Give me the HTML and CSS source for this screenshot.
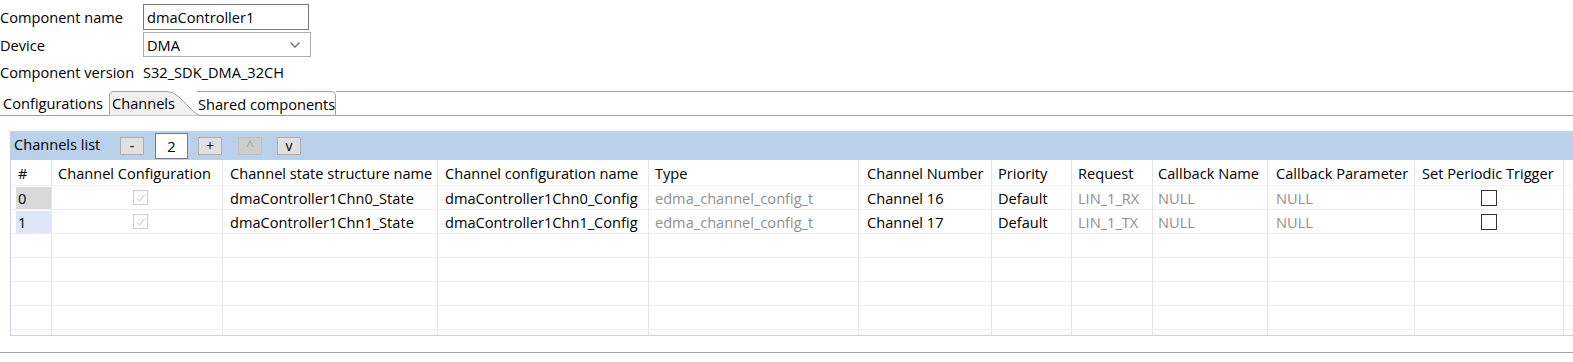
FILE: index.html
```html
<!DOCTYPE html>
<html>
<head>
<meta charset="utf-8">
<link rel="stylesheet" href="styles.css">
</head>
<body>
<div class="form">
  <div class="frow r1"><span class="lbl">Component name</span><div class="input name">dmaController1</div></div>
  <div class="frow r2"><span class="lbl">Device</span><div class="select"><span>DMA</span><svg class="chev" width="12" height="8" viewBox="0 0 12 8"><path d="M1.5 1.5 L6 6 L10.5 1.5" fill="none" stroke="#6d6d6d" stroke-width="1.3"/></svg></div></div>
  <div class="frow r3"><span class="lbl">Component version</span><span class="val">S32_SDK_DMA_32CH</span></div>
</div>

<div class="tabs">
  <div class="tab first">Configurations</div>
  <div class="tab sel">
    <svg class="selbg" width="92" height="25" viewBox="0 0 92 25" preserveAspectRatio="none"><path d="M0.5 25 L0.5 5 Q0.5 0.5 5 0.5 L58 0.5 Q64 0.5 70 6 L82 18 Q88 24.5 92 24.5 L92 25 Z" fill="#f0f0f0" stroke="#a0a0a0" stroke-width="1"/></svg>
    <span>Channels</span>
  </div>
  <div class="tab shared">Shared components</div>
  <div class="tabfill"></div>
</div>

<div class="panel">
  <div class="listbar">
    <span class="ltitle">Channels list</span>
    <span class="btn minus">-</span>
    <span class="count">2</span>
    <span class="btn plus">+</span>
    <span class="btn up dis">^</span>
    <span class="btn down">v</span>
  </div>
  <div class="grid">
    <div class="row head">
      <div class="c c0">#</div>
      <div class="c c1">Channel Configuration</div>
      <div class="c c2">Channel state structure name</div>
      <div class="c c3">Channel configuration name</div>
      <div class="c c4">Type</div>
      <div class="c c5">Channel Number</div>
      <div class="c c6">Priority</div>
      <div class="c c7">Request</div>
      <div class="c c8">Callback Name</div>
      <div class="c c9">Callback Parameter</div>
      <div class="c c10">Set Periodic Trigger</div>
      <div class="c cf"></div>
    </div>
    <div class="row">
      <div class="c c0"><span class="idx idx-sel">0</span></div>
      <div class="c c1"><span class="cb cb-dis"><svg width="13" height="12" viewBox="0 0 13 12"><path d="M3 6.5 L5.5 9 L10.5 3" fill="none" stroke="#c4c4c4" stroke-width="1"/></svg></span></div>
      <div class="c c2">dmaController1Chn0_State</div>
      <div class="c c3">dmaController1Chn0_Config</div>
      <div class="c c4 g">edma_channel_config_t</div>
      <div class="c c5">Channel 16</div>
      <div class="c c6">Default</div>
      <div class="c c7 g">LIN_1_RX</div>
      <div class="c c8 g">NULL</div>
      <div class="c c9 g">NULL</div>
      <div class="c c10"><span class="cb cb-on"></span></div>
      <div class="c cf"></div>
    </div>
    <div class="row">
      <div class="c c0"><span class="idx idx-alt">1</span></div>
      <div class="c c1"><span class="cb cb-dis"><svg width="13" height="12" viewBox="0 0 13 12"><path d="M3 6.5 L5.5 9 L10.5 3" fill="none" stroke="#c4c4c4" stroke-width="1"/></svg></span></div>
      <div class="c c2">dmaController1Chn1_State</div>
      <div class="c c3">dmaController1Chn1_Config</div>
      <div class="c c4 g">edma_channel_config_t</div>
      <div class="c c5">Channel 17</div>
      <div class="c c6">Default</div>
      <div class="c c7 g">LIN_1_TX</div>
      <div class="c c8 g">NULL</div>
      <div class="c c9 g">NULL</div>
      <div class="c c10"><span class="cb cb-on"></span></div>
      <div class="c cf"></div>
    </div>
    <div class="row empty"><div class="c c0"></div><div class="c c1"></div><div class="c c2"></div><div class="c c3"></div><div class="c c4"></div><div class="c c5"></div><div class="c c6"></div><div class="c c7"></div><div class="c c8"></div><div class="c c9"></div><div class="c c10"></div><div class="c cf"></div></div>
    <div class="row empty"><div class="c c0"></div><div class="c c1"></div><div class="c c2"></div><div class="c c3"></div><div class="c c4"></div><div class="c c5"></div><div class="c c6"></div><div class="c c7"></div><div class="c c8"></div><div class="c c9"></div><div class="c c10"></div><div class="c cf"></div></div>
    <div class="row empty"><div class="c c0"></div><div class="c c1"></div><div class="c c2"></div><div class="c c3"></div><div class="c c4"></div><div class="c c5"></div><div class="c c6"></div><div class="c c7"></div><div class="c c8"></div><div class="c c9"></div><div class="c c10"></div><div class="c cf"></div></div>
    <div class="row empty"><div class="c c0"></div><div class="c c1"></div><div class="c c2"></div><div class="c c3"></div><div class="c c4"></div><div class="c c5"></div><div class="c c6"></div><div class="c c7"></div><div class="c c8"></div><div class="c c9"></div><div class="c c10"></div><div class="c cf"></div></div>
    <div class="row part"><div class="c c0"></div><div class="c c1"></div><div class="c c2"></div><div class="c c3"></div><div class="c c4"></div><div class="c c5"></div><div class="c c6"></div><div class="c c7"></div><div class="c c8"></div><div class="c c9"></div><div class="c c10"></div><div class="c cf"></div></div>
  </div>
</div>
<div class="bottomline"></div>
</body>
</html>
```

FILE: styles.css
```css
* { box-sizing: border-box; }
html, body { margin: 0; padding: 0; background: #ffffff; }
body {
  font-family: "Open Sans", "Noto Sans", sans-serif;
  font-size: 14.6px;
  color: #000;
  width: 1573px;
  height: 362px;
  overflow: hidden;
}

.form { padding-top: 4px; }
.frow {
  display: grid;
  grid-template-columns: 143px auto;
  align-items: center;
  justify-items: start;
}
.r1 { height: 26px; }
.r2 { height: 25px; margin-top: 2px; }
.r3 { height: 24px; margin-top: 3px; }
.lbl { padding-left: 0; white-space: nowrap; }

.input {
  height: 26px;
  border: 1px solid #7a7a7a;
  background: #fff;
  display: flex;
  align-items: center;
  padding-left: 3px;
}
.input.name { width: 166px; }

.select {
  width: 168px;
  height: 25px;
  border: 1px solid #adadad;
  background: #fff;
  display: flex;
  align-items: center;
  justify-content: space-between;
  padding-left: 3px;
  padding-right: 9px;
}
.chev { display: block; }
.val { padding-left: 0; }

.tabs {
  margin-top: 7px;
  height: 25px;
  display: flex;
  border-bottom: 1px solid #a0a0a0;
}
.tab {
  height: 24px;
  display: flex;
  align-items: center;
  white-space: nowrap;
}
.tab.first { width: 109px; padding-left: 3px; }
.tab.sel {
  position: relative;
  width: 88px;
  padding-left: 3px;
}
.selbg { position: absolute; left: 0; top: 0; }
.tab.sel span { position: relative; }
.tab.shared {
  width: 139px;
  padding-left: 1px;
  border-top: 1px solid #a0a0a0;
  border-right: 1px solid #a0a0a0;
  border-top-right-radius: 5px;
}
.tabfill { flex: 1; border-top: 1px solid #a0a0a0; height: 24px; }

.panel { margin-top: 15px; margin-left: 10px; }

.listbar {
  height: 29px;
  background: #b9d1ea;
  display: flex;
  align-items: center;
  padding-left: 4px;
}
.ltitle { width: 106px; white-space: nowrap; margin-bottom: 4px; }
.btn {
  width: 24px;
  height: 18px;
  background: #e1e1e1;
  border: 1px solid #adadad;
  display: flex;
  align-items: center;
  justify-content: center;
  font-size: 14px;
  line-height: 1;
}
.btn.dis { background: #cccccc; border-color: #bfbfbf; color: #a3a3a3; }
.count {
  width: 33px;
  height: 26px;
  background: #fff;
  border: 1px solid #7a7a7a;
  display: flex;
  align-items: center;
  justify-content: center;
  margin-left: 11px;
}
.btn.plus { margin-left: 10px; }
.btn.up { margin-left: 16px; }
.btn.down { margin-left: 15px; }

.grid {
  border-left: 1px solid #c9d3e0;
  border-bottom: 1px solid #c9d3e0;
  height: 176px;
  overflow: hidden;
}
.row {
  display: flex;
  height: 24px;
  border-bottom: 1px solid #ededed;
}
.row.head { height: 26px; border-bottom: 1px solid #f2f2f2; }
.row.part { height: 6px; border-bottom: 0; }
.c {
  height: 100%;
  border-right: 1px solid #e6e6e6;
  display: flex;
  align-items: center;
  padding-left: 7px;
  white-space: nowrap;
  overflow: hidden;
  flex: none;
}
.c0 { width: 41px; padding-left: 5px; }
.c1 { width: 171px; padding-left: 6px; }
.c2 { width: 215px; }
.c3 { width: 211px; }
.c4 { width: 210px; padding-left: 6px; }
.c5 { width: 133px; padding-left: 8px; }
.c6 { width: 80px; padding-left: 6px; }
.c7 { width: 81px; padding-left: 6px; }
.c8 { width: 115px; padding-left: 5px; }
.c9 { width: 147px; padding-left: 8px; }
.c10 { width: 149px; }
.cf { flex: 1; border-right: 0; }
.head .c0 { padding-left: 7px; }
.g { color: #8f8f8f; }

.row:not(.head) .c0 { padding-left: 5px; align-items: stretch; }
.idx {
  width: 35px;
  margin: 1px 0 0 0;
  padding-left: 2px;
  display: flex;
  align-items: center;
}
.idx-sel { background: #d9d9d9; }
.idx-alt { background: #dce6f4; }

.row:not(.head) .c1 { padding-left: 81px; }
.row:not(.head) .c10 { justify-content: center; padding-left: 0; }
.cb {
  width: 15px;
  height: 15px;
  display: flex;
  align-items: center;
  justify-content: center;
}
.cb-dis { border: 1px solid #d0d0d0; background: #fbfbfb; }
.cb-on { border: 1px solid #333; background: #fff; width: 16px; height: 16px; }

.bottomline {
  margin-top: 16px;
  height: 1px;
  background: #a0a0a0;
}
```
